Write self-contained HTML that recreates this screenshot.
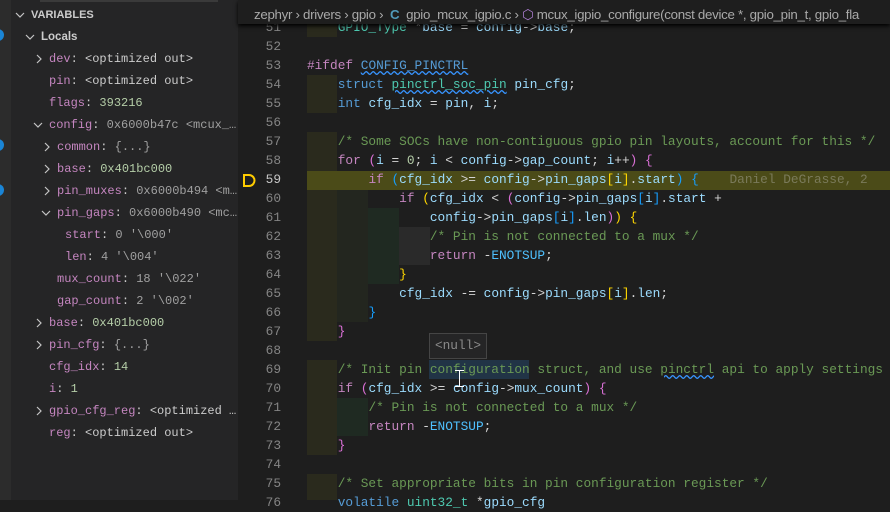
<!DOCTYPE html>
<html><head><meta charset="utf-8"><style>
*{margin:0;padding:0;box-sizing:border-box}
body{width:890px;height:500px;overflow:hidden;background:#1e1e1e;position:relative;font-family:"Liberation Mono",monospace}
#side{position:absolute;left:0;top:0;width:238px;height:500px;background:#252526}
#strip{position:absolute;left:0;top:0;width:11px;height:500px;background:#2c2c2c}
.dot{position:absolute;left:-8px;width:12px;height:12px;border-radius:50%;background:#1a85d6}
.row{position:absolute;font-size:12px;color:#cccccc;white-space:pre;height:22px;line-height:22px}
.n{color:#c586c0}.v{color:#b5cea8}.g{color:#a0a0a0}
.chev{position:absolute;width:10px;height:10px}
#bc{position:absolute;left:238px;top:0;width:652px;height:24px;background:#1e1e1e;font-family:"Liberation Sans","DejaVu Sans",sans-serif;font-size:13.3px;color:#a9a9a9;line-height:30px;padding-left:16px;white-space:pre;box-shadow:0 2px 4px #000;z-index:3;letter-spacing:-0.3px;overflow:hidden}
.ln{position:absolute;left:238px;width:43px;text-align:right;font-size:12.8px;color:#858585;height:19px;line-height:19px}
.cl{position:absolute;left:307px;font-size:12.8px;color:#d4d4d4;white-space:pre;height:19px;line-height:19px}
.k{color:#569cd6}.c{color:#c586c0}.vr{color:#9cdcfe}.cm{color:#6a9955}.t{color:#4ec9b0}.y{color:#ffd700}.p{color:#da70d6}.b{color:#179fff}.s{color:#b5cea8}.cn{color:#4fc1ff}
.ind{position:absolute;background:#2a2a1d}
</style></head><body>
<svg width="0" height="0" style="position:absolute"><defs>
<symbol id="r" viewBox="0 0 10 10"><path d="M3 1l4 4-4 4" fill="none" stroke="#c5c5c5" stroke-width="1.2"/></symbol>
<symbol id="d" viewBox="0 0 10 10"><path d="M1 3l4 4 4-4" fill="none" stroke="#c5c5c5" stroke-width="1.2"/></symbol>
</defs></svg>
<div id="side">
<div style="position:absolute;left:40px;top:0;width:178px;height:2px;background:#3a3a3a"></div>
<div id="strip"></div>
<div class="dot" style="top:29px"></div><div class="dot" style="top:139px"></div><div class="dot" style="top:184px"></div>
<svg class="chev" style="left:15px;top:10px"><use href="#d"/></svg>
<div class="row" style="left:31px;top:4px;font-family:'Liberation Sans',sans-serif;font-weight:bold;font-size:11px">VARIABLES</div>
<svg class="chev" style="left:25px;top:32px"><use href="#d"/></svg>
<div class="row" style="left:41px;top:26px;font-family:'Liberation Sans',sans-serif;font-weight:bold;font-size:11.5px">Locals</div>
<svg class="chev" style="left:34px;top:54px"><use href="#r"/></svg>
<div class="row" style="left:49px;top:48px"><span class="n">dev</span>: &lt;optimized out&gt;</div>
<div class="row" style="left:49px;top:70px"><span class="n">pin</span>: &lt;optimized out&gt;</div>
<div class="row" style="left:49px;top:92px"><span class="n">flags</span>: <span class="v">393216</span></div>
<svg class="chev" style="left:33px;top:120px"><use href="#d"/></svg>
<div class="row" style="left:49px;top:114px"><span class="n">config</span>: <span class="g">0x6000b47c &lt;mcux_…</span></div>
<svg class="chev" style="left:42px;top:142px"><use href="#r"/></svg>
<div class="row" style="left:57px;top:136px"><span class="n">common</span>: <span class="g">{...}</span></div>
<svg class="chev" style="left:42px;top:164px"><use href="#r"/></svg>
<div class="row" style="left:57px;top:158px"><span class="n">base</span>: <span class="v">0x401bc000</span></div>
<svg class="chev" style="left:42px;top:186px"><use href="#r"/></svg>
<div class="row" style="left:57px;top:180px"><span class="n">pin_muxes</span>: <span class="g">0x6000b494 &lt;m…</span></div>
<svg class="chev" style="left:41px;top:208px"><use href="#d"/></svg>
<div class="row" style="left:57px;top:202px"><span class="n">pin_gaps</span>: <span class="g">0x6000b490 &lt;mc…</span></div>
<div class="row" style="left:65px;top:224px"><span class="n">start</span>: <span class="g">0 '\000'</span></div>
<div class="row" style="left:65px;top:246px"><span class="n">len</span>: <span class="g">4 '\004'</span></div>
<div class="row" style="left:57px;top:268px"><span class="n">mux_count</span>: <span class="g">18 '\022'</span></div>
<div class="row" style="left:57px;top:290px"><span class="n">gap_count</span>: <span class="g">2 '\002'</span></div>
<svg class="chev" style="left:34px;top:318px"><use href="#r"/></svg>
<div class="row" style="left:49px;top:312px"><span class="n">base</span>: <span class="v">0x401bc000</span></div>
<svg class="chev" style="left:34px;top:340px"><use href="#r"/></svg>
<div class="row" style="left:49px;top:334px"><span class="n">pin_cfg</span>: <span class="g">{...}</span></div>
<div class="row" style="left:49px;top:356px"><span class="n">cfg_idx</span>: <span class="v">14</span></div>
<div class="row" style="left:49px;top:378px"><span class="n">i</span>: <span class="v">1</span></div>
<svg class="chev" style="left:34px;top:406px"><use href="#r"/></svg>
<div class="row" style="left:49px;top:400px"><span class="n">gpio_cfg_reg</span>: &lt;optimized …</div>
<div class="row" style="left:49px;top:422px"><span class="n">reg</span>: &lt;optimized out&gt;</div>
</div>
<div id="bc">zephyr › drivers › gpio ›  <b style="color:#519aba;font-weight:bold">C</b>  gpio_mcux_igpio.c › <span style="color:#b180d7">⬡</span> mcux_igpio_configure(const device *, gpio_pin_t, gpio_fla</div>

<div class="ind" style="left:307px;top:18px;width:30px;height:19px"></div>
<div class="ind" style="left:307px;top:75px;width:30px;height:38px"></div>
<div class="ind" style="left:307px;top:132px;width:30px;height:209px"></div>
<div class="ind" style="left:337px;top:189px;width:31px;height:133px;background:#23261f"></div>
<div class="ind" style="left:368px;top:208px;width:31px;height:76px;background:#1f2a22"></div>
<div class="ind" style="left:399px;top:227px;width:31px;height:38px;background:#2a2a2a"></div>
<div class="ind" style="left:307px;top:360px;width:30px;height:95px"></div>
<div class="ind" style="left:337px;top:398px;width:31px;height:38px;background:#1f2a22"></div>
<div class="ind" style="left:307px;top:474px;width:30px;height:26px"></div>
<div style="position:absolute;left:307px;top:171px;width:583px;height:19px;background:#4b4b18"></div>
<div style="position:absolute;left:429px;top:360px;width:100px;height:19px;background:#264f78;opacity:.45"></div>
<svg style="position:absolute;left:242px;top:173px" width="15" height="15"><path d="M2 2h5a5.5 5.5 0 0 1 0 11H2z" fill="none" stroke="#ffcc00" stroke-width="2"/></svg>

<div class="ln" style="top:18px">51</div><div class="ln" style="top:37px">52</div><div class="ln" style="top:56px">53</div><div class="ln" style="top:75px">54</div><div class="ln" style="top:94px">55</div><div class="ln" style="top:113px">56</div><div class="ln" style="top:132px">57</div><div class="ln" style="top:151px">58</div><div class="ln" style="top:170px;color:#c6c6c6">59</div><div class="ln" style="top:189px">60</div><div class="ln" style="top:208px">61</div><div class="ln" style="top:227px">62</div><div class="ln" style="top:246px">63</div><div class="ln" style="top:265px">64</div><div class="ln" style="top:284px">65</div><div class="ln" style="top:303px">66</div><div class="ln" style="top:322px">67</div><div class="ln" style="top:341px">68</div><div class="ln" style="top:360px">69</div><div class="ln" style="top:379px">70</div><div class="ln" style="top:398px">71</div><div class="ln" style="top:417px">72</div><div class="ln" style="top:436px">73</div><div class="ln" style="top:455px">74</div><div class="ln" style="top:474px">75</div><div class="ln" style="top:493px">76</div>

<div class="cl" style="top:18px">    <span class="t">GPIO_Type</span> *<span class="vr">base</span> = <span class="vr">config</span>-&gt;<span class="vr">base</span>;</div>
<div class="cl" style="top:56px"><span class="c">#ifdef</span> <span class="k" style="text-decoration:underline wavy #3794ff">CONFIG_PINCTRL</span></div>
<div class="cl" style="top:75px">    <span class="k">struct</span> <span class="t" style="text-decoration:underline wavy #3794ff">pinctrl_soc_pin</span> <span class="vr">pin_cfg</span>;</div>
<div class="cl" style="top:94px">    <span class="k">int</span> <span class="vr">cfg_idx</span> = <span class="vr">pin</span>, <span class="vr">i</span>;</div>
<div class="cl" style="top:132px">    <span class="cm">/* Some SOCs have non-contiguous gpio pin layouts, account for this */</span></div>
<div class="cl" style="top:151px">    <span class="c">for</span> <span class="p">(</span><span class="vr">i</span> = <span class="s">0</span>; <span class="vr">i</span> &lt; <span class="vr">config</span>-&gt;<span class="vr">gap_count</span>; <span class="vr">i</span>++<span class="p">)</span> <span class="p">{</span></div>
<div class="cl" style="top:170px">        <span class="c">if</span> <span class="b">(</span><span class="vr">cfg_idx</span> &gt;= <span class="vr">config</span>-&gt;<span class="vr">pin_gaps</span><span class="y">[</span><span class="vr">i</span><span class="y">]</span>.<span class="vr">start</span><span class="b">)</span> <span class="b">{</span>    <span style="color:#7a7a5a">Daniel DeGrasse, 2</span></div>
<div class="cl" style="top:189px">            <span class="c">if</span> <span class="y">(</span><span class="vr">cfg_idx</span> &lt; <span class="p">(</span><span class="vr">config</span>-&gt;<span class="vr">pin_gaps</span><span class="b">[</span><span class="vr">i</span><span class="b">]</span>.<span class="vr">start</span> +</div>
<div class="cl" style="top:208px">                <span class="vr">config</span>-&gt;<span class="vr">pin_gaps</span><span class="b">[</span><span class="vr">i</span><span class="b">]</span>.<span class="vr">len</span><span class="p">)</span><span class="y">)</span> <span class="y">{</span></div>
<div class="cl" style="top:227px">                <span class="cm">/* Pin is not connected to a mux */</span></div>
<div class="cl" style="top:246px">                <span class="c">return</span> -<span class="cn">ENOTSUP</span>;</div>
<div class="cl" style="top:265px">            <span class="y">}</span></div>
<div class="cl" style="top:284px">            <span class="vr">cfg_idx</span> -= <span class="vr">config</span>-&gt;<span class="vr">pin_gaps</span><span class="y">[</span><span class="vr">i</span><span class="y">]</span>.<span class="vr">len</span>;</div>
<div class="cl" style="top:303px">        <span class="b">}</span></div>
<div class="cl" style="top:322px">    <span class="p">}</span></div>
<div class="cl" style="top:360px">    <span class="cm">/* Init pin configuration struct, and use <span style="text-decoration:underline wavy #3794ff">pinctrl</span> api to apply settings</span></div>
<div class="cl" style="top:379px">    <span class="c">if</span> <span class="p">(</span><span class="vr">cfg_idx</span> &gt;= <span class="vr">config</span>-&gt;<span class="vr">mux_count</span><span class="p">)</span> <span class="p">{</span></div>
<div class="cl" style="top:398px">        <span class="cm">/* Pin is not connected to a mux */</span></div>
<div class="cl" style="top:417px">        <span class="c">return</span> -<span class="cn">ENOTSUP</span>;</div>
<div class="cl" style="top:436px">    <span class="p">}</span></div>
<div class="cl" style="top:474px">    <span class="cm">/* Set appropriate bits in pin configuration register */</span></div>
<div class="cl" style="top:493px">    <span class="k">volatile</span> <span class="t">uint32_t</span> *<span class="vr">gpio_cfg</span></div>
<div style="position:absolute;left:429px;top:333px;width:58px;height:26px;background:#252526;border:1px solid #454545;color:#8a8a8a;font-size:12.8px;line-height:24px;text-align:center">&lt;null&gt;</div>
<div style="position:absolute;left:459px;top:370px;width:1px;height:16px;background:#fff"></div>
<div style="position:absolute;left:455px;top:370px;width:9px;height:1px;background:#fff"></div>
<div style="position:absolute;left:455px;top:386px;width:9px;height:1px;background:#fff"></div>
</body></html>
